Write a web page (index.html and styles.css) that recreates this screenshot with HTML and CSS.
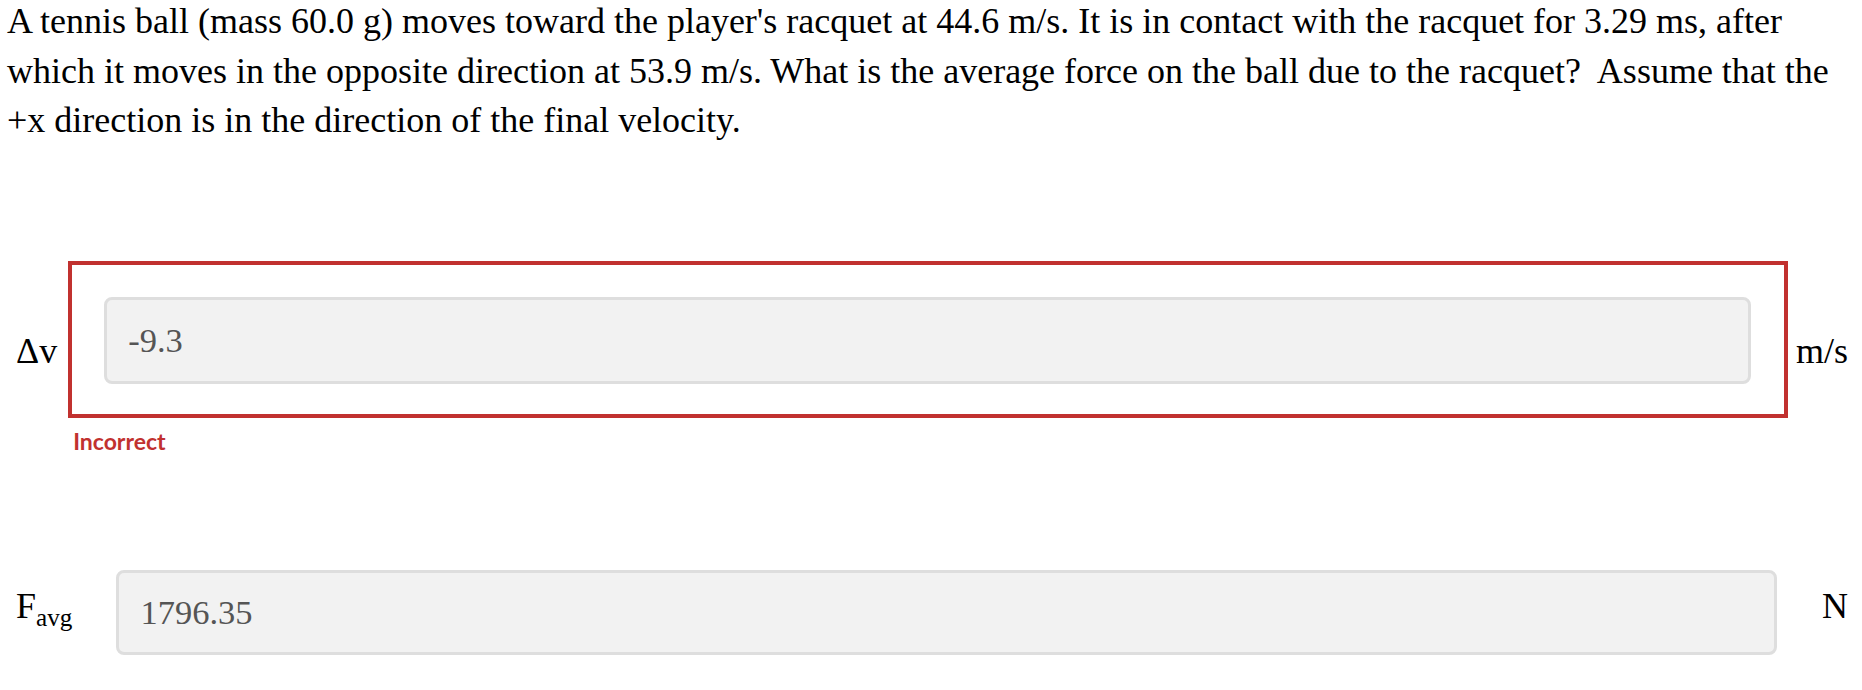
FILE: index.html
```html
<!DOCTYPE html>
<html lang="en">
<head>
    <meta charset="UTF-8">
    <meta name="viewport" content="width=device-width, initial-scale=1.0">
    <title>Tennis Ball Impulse</title>

    <link rel="stylesheet" href="styles.css">
</head>
<body>

    <p class="question">A tennis ball (mass 60.0 g) moves toward the player's racquet at 44.6 m/s. It is in contact with the racquet for 3.29 ms, after which it moves in the opposite direction at 53.9 m/s. What is the average force on the ball due to the racquet?&nbsp; Assume that the +x direction is in the direction of the final velocity.</p>

    <!-- Change in velocity -->
    <div class="answer-row row-first">
        <div class="answer-label">&Delta;v</div>
        <div class="answer-field">
            <div class="answer-box incorrect">
                <input class="answer-input" type="text" value="-9.3" readonly>
            </div>
            <div class="feedback">Incorrect</div>
        </div>
        <div class="answer-unit">m/s</div>
    </div>

    <!-- Average force -->
    <div class="answer-row row-second">
        <div class="answer-label">F<sub>avg</sub></div>
        <div class="answer-field">
            <div class="answer-box">
                <input class="answer-input" type="text" value="1796.35" readonly>
            </div>
        </div>
        <div class="answer-unit">N</div>
    </div>

</body>
</html>
```

FILE: styles.css
```css
/* General page styling */
body {
    margin: 0;
    padding: 0;
    font-family: "Liberation Serif", "Times New Roman", serif;
    background-color: #fff;
    color: #000;
}

/* Question text */
.question {
    margin: -3px 0 0;
    padding: 0 8px 0 7px;
    font-size: 36px;
    line-height: 49.5px;
}

/* Answer rows */
.answer-row {
    display: flex;
    align-items: flex-start;
    padding: 0 14px 0 16px;
    font-size: 36px;
    line-height: 50px;
}

.row-first {
    margin-top: 115px;
}

.row-second {
    margin-top: 80px;
}

.answer-label {
    margin-right: 11px;
}

.row-second .answer-label {
    margin-right: 8px;
}

.answer-label sub {
    font-size: 70%;
    line-height: 0;
}

.answer-field {
    flex: 1;
}

.answer-box {
    border: 4px solid transparent;
    padding: 32px 33px 30px 32px;
}

.answer-box.incorrect {
    border-color: #c1312f;
}

.answer-input {
    display: block;
    width: 100%;
    box-sizing: border-box;
    height: 87px;
    margin: 0;
    padding: 0 21px;
    border: 3px solid #dedede;
    border-radius: 8px;
    background-color: #f2f2f2;
    font-family: "Liberation Serif", "Times New Roman", serif;
    font-size: 34.5px;
    color: #555;
    outline: none;
}

.row-second .answer-input {
    height: 85px;
}

.answer-unit {
    margin-left: 8px;
}

.row-first .answer-label,
.row-first .answer-unit {
    padding-top: 65px;
}

.row-second .answer-label,
.row-second .answer-unit {
    padding-top: 47px;
}

/* Feedback under the box */
.feedback {
    margin: 11px 0 0 5px;
    font-family: "Lato", "Open Sans", sans-serif;
    font-weight: 700;
    font-size: 23px;
    line-height: 25px;
    color: #c1312f;
}
```
